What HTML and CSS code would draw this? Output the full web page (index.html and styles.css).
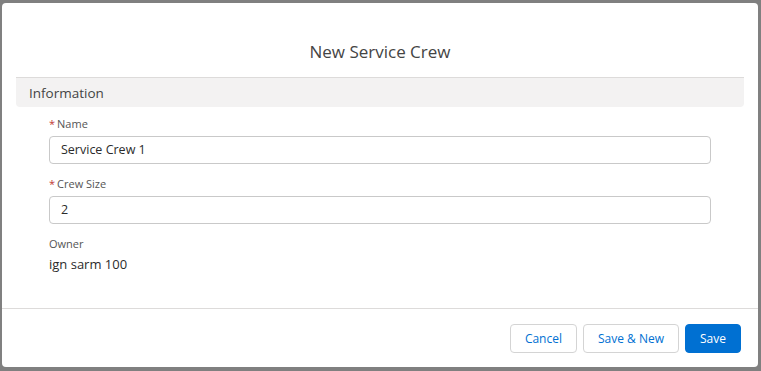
FILE: index.html
```html
<!DOCTYPE html>
<html>
<head>
<meta charset="utf-8">
<link rel="stylesheet" href="styles.css">
</head>
<body>
<div class="modal">
  <header class="modal-header">
    <h2 class="title">New Service Crew</h2>
  </header>
  <div class="modal-body">
    <div class="section">Information</div>
    <div class="fields">
      <div class="field">
        <label class="label"><abbr class="req">*</abbr>Name</label>
        <div class="input">Service Crew 1</div>
      </div>
      <div class="field">
        <label class="label"><abbr class="req">*</abbr>Crew Size</label>
        <div class="input">2</div>
      </div>
      <div class="field">
        <label class="label">Owner</label>
        <div class="value">ign sarm 100</div>
      </div>
    </div>
  </div>
  <footer class="modal-footer">
    <button class="btn btn-neutral">Cancel</button>
    <button class="btn btn-neutral">Save &amp; New</button>
    <button class="btn btn-brand">Save</button>
  </footer>
</div>
</body>
</html>
```
FILE: styles.css
```css
* { box-sizing: border-box; }
html, body { margin: 0; height: 100%; }
body {
  background: #808080;
  padding: 3px 3px 4px 2px;
  font-family: "Open Sans", "Noto Sans", sans-serif;
  color: #3e3e3c;
}
.modal {
  background: #fff;
  height: 364px;
  border-radius: 4px;
  display: flex;
  flex-direction: column;
}
.modal-header {
  height: 74px;
  display: flex;
  align-items: center;
  justify-content: center;
  padding-top: 22px;
}
.title {
  margin: 0;
  font-size: 17px;
  font-weight: 400;
  color: #444;
}
.modal-body {
  flex: 1;
}
.section {
  margin: 0 14px;
  height: 30px;
  background: #f3f2f2;
  border-top: 1px solid #dddbda;
  border-radius: 0 0 4px 4px;
  padding-left: 13px;
  padding-top: 2px;
  font-size: 13.5px;
  line-height: 27px;
  color: #444;
}
.fields {
  padding: 9px 47px 0 47px;
  display: flex;
  flex-direction: column;
  gap: 12px;
}
.field { display: flex; flex-direction: column; }
.label {
  font-size: 11px;
  line-height: 16px;
  margin-bottom: 4px;
  color: #555;
}
.req {
  color: #c23934;
  text-decoration: none;
  margin-right: 2px;
}
.input {
  height: 28px;
  border: 1px solid #c9c9c9;
  border-radius: 4px;
  padding: 0 11px;
  font-size: 12.5px;
  line-height: 26px;
  color: #2b2b2b;
}
.value {
  font-size: 13px;
  line-height: 20px;
  margin-top: -2px;
  color: #2b2b2b;
}
.modal-footer {
  border-top: 1px solid #dddbda;
  height: 59px;
  display: flex;
  justify-content: flex-end;
  align-items: flex-start;
  gap: 6px;
  padding: 15px 17px 0 0;
}
.btn {
  font-family: inherit;
  height: 29px;
  border-radius: 4px;
  font-size: 12px;
  padding: 0 14px;
  cursor: pointer;
}
.btn-neutral {
  background: #fff;
  border: 1px solid #d4d4d4;
  color: #0070d2;
}
.btn-brand {
  background: #0070d2;
  border: 1px solid #0070d2;
  color: #fff;
}
```
